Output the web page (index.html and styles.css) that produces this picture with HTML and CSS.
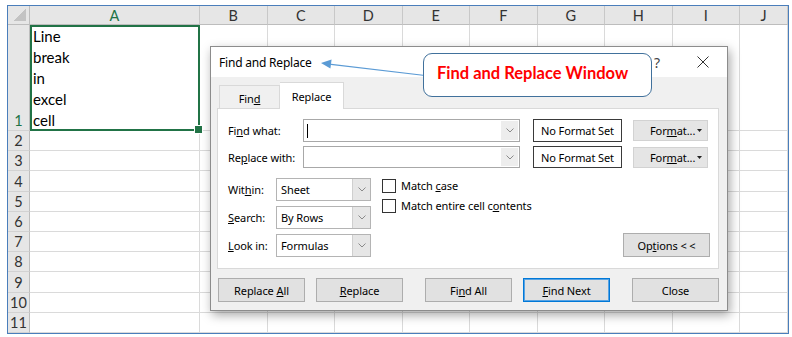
FILE: index.html
```html
<!DOCTYPE html>
<html>
<head>
<meta charset="utf-8">
<link rel="stylesheet" href="styles.css">
</head>
<body>
<div class="frame">
  <div class="grid">
    <div class="corner"></div>
    <div class="ch sel-h">A</div><div class="ch">B</div><div class="ch">C</div><div class="ch">D</div><div class="ch">E</div><div class="ch">F</div><div class="ch">G</div><div class="ch">H</div><div class="ch">I</div><div class="ch">J</div>

    <div class="rh sel-h">1</div>
    <div class="c sel"><div>Line</div><div>break</div><div>in</div><div>excel</div><div>cell</div></div>
    <div class="c"></div><div class="c"></div><div class="c"></div><div class="c"></div><div class="c"></div><div class="c"></div><div class="c"></div><div class="c"></div><div class="c"></div>

    <div class="rh">2</div><div class="c"></div><div class="c"></div><div class="c"></div><div class="c"></div><div class="c"></div><div class="c"></div><div class="c"></div><div class="c"></div><div class="c"></div><div class="c"></div>
    <div class="rh">3</div><div class="c"></div><div class="c"></div><div class="c"></div><div class="c"></div><div class="c"></div><div class="c"></div><div class="c"></div><div class="c"></div><div class="c"></div><div class="c"></div>
    <div class="rh">4</div><div class="c"></div><div class="c"></div><div class="c"></div><div class="c"></div><div class="c"></div><div class="c"></div><div class="c"></div><div class="c"></div><div class="c"></div><div class="c"></div>
    <div class="rh">5</div><div class="c"></div><div class="c"></div><div class="c"></div><div class="c"></div><div class="c"></div><div class="c"></div><div class="c"></div><div class="c"></div><div class="c"></div><div class="c"></div>
    <div class="rh">6</div><div class="c"></div><div class="c"></div><div class="c"></div><div class="c"></div><div class="c"></div><div class="c"></div><div class="c"></div><div class="c"></div><div class="c"></div><div class="c"></div>
    <div class="rh">7</div><div class="c"></div><div class="c"></div><div class="c"></div><div class="c"></div><div class="c"></div><div class="c"></div><div class="c"></div><div class="c"></div><div class="c"></div><div class="c"></div>
    <div class="rh">8</div><div class="c"></div><div class="c"></div><div class="c"></div><div class="c"></div><div class="c"></div><div class="c"></div><div class="c"></div><div class="c"></div><div class="c"></div><div class="c"></div>
    <div class="rh">9</div><div class="c"></div><div class="c"></div><div class="c"></div><div class="c"></div><div class="c"></div><div class="c"></div><div class="c"></div><div class="c"></div><div class="c"></div><div class="c"></div>
    <div class="rh">10</div><div class="c"></div><div class="c"></div><div class="c"></div><div class="c"></div><div class="c"></div><div class="c"></div><div class="c"></div><div class="c"></div><div class="c"></div><div class="c"></div>
    <div class="rh">11</div><div class="c"></div><div class="c"></div><div class="c"></div><div class="c"></div><div class="c"></div><div class="c"></div><div class="c"></div><div class="c"></div><div class="c"></div><div class="c"></div>
  </div>
</div>

<div class="dialog">
  <div class="titlebar">
    <span class="title">Find and Replace</span>
    <span class="help">?</span>
    <svg class="close" width="12" height="12" viewBox="0 0 12 12"><path d="M0.5 0.5L11.5 11.5M11.5 0.5L0.5 11.5" stroke="#333" stroke-width="1" fill="none"/></svg>
  </div>
  <div class="body">
    <div class="tabs">
      <div class="tab"><span>Fin<u>d</u></span></div>
      <div class="tab active"><span>Replace</span></div>
    </div>
    <div class="panel">
      <div class="row row1">
        <span class="lbl">Fi<u>n</u>d what:</span>
        <div class="input"><div class="field"><span class="caret"></span></div><div class="dd"><svg width="8" height="5" viewBox="0 0 8 5"><path d="M0.5 0.5L4 4L7.5 0.5" fill="none" stroke="#8a8a8a"/></svg></div></div>
        <div class="nfs"><span>No Format Set</span></div>
        <div class="fmt"><span>For<u>m</u>at...</span><svg width="5" height="3" viewBox="0 0 5 3"><path d="M0 0H5L2.5 3Z" fill="#222"/></svg></div>
      </div>
      <div class="row row2">
        <span class="lbl">Re<u>p</u>lace with:</span>
        <div class="input"><div class="field"></div><div class="dd"><svg width="8" height="5" viewBox="0 0 8 5"><path d="M0.5 0.5L4 4L7.5 0.5" fill="none" stroke="#8a8a8a"/></svg></div></div>
        <div class="nfs"><span>No Format Set</span></div>
        <div class="fmt"><span>For<u>m</u>at...</span><svg width="5" height="3" viewBox="0 0 5 3"><path d="M0 0H5L2.5 3Z" fill="#222"/></svg></div>
      </div>
      <div class="lower">
        <div class="opts">
          <div class="orow"><span class="olbl">Wit<u>h</u>in:</span><div class="combo"><span>Sheet</span><div class="dd"><svg width="8" height="5" viewBox="0 0 8 5"><path d="M0.5 0.5L4 4L7.5 0.5" fill="none" stroke="#8a8a8a"/></svg></div></div></div>
          <div class="orow"><span class="olbl"><u>S</u>earch:</span><div class="combo"><span>By Rows</span><div class="dd"><svg width="8" height="5" viewBox="0 0 8 5"><path d="M0.5 0.5L4 4L7.5 0.5" fill="none" stroke="#8a8a8a"/></svg></div></div></div>
          <div class="orow"><span class="olbl"><u>L</u>ook in:</span><div class="combo"><span>Formulas</span><div class="dd"><svg width="8" height="5" viewBox="0 0 8 5"><path d="M0.5 0.5L4 4L7.5 0.5" fill="none" stroke="#8a8a8a"/></svg></div></div></div>
        </div>
        <div class="checks">
          <div class="chk"><span class="box"></span><span>Match <u>c</u>ase</span></div>
          <div class="chk"><span class="box"></span><span>Match entire cell c<u>o</u>ntents</span></div>
        </div>
        <div class="btn options-btn"><span>Op<u>t</u>ions &lt; &lt;</span></div>
      </div>
    </div>
    <div class="buttons">
      <div class="btn"><span>Replace <u>A</u>ll</span></div>
      <div class="btn gap-s"><span><u>R</u>eplace</span></div>
      <div class="btn gap-l"><span>Fi<u>n</u>d All</span></div>
      <div class="btn gap-s default"><span><u>F</u>ind Next</span></div>
      <div class="btn gap-l"><span>Close</span></div>
    </div>
  </div>
</div>

<svg class="arrow" width="112" height="25" viewBox="0 0 112 25">
  <path d="M14 9.1L110 20.5" stroke="#5b9bd5" stroke-width="1.2" fill="none"/>
  <path d="M6 8L16.6 4.6L15.4 13.4Z" fill="#5b9bd5"/>
</svg>

<div class="callout"><span>Find and Replace Window</span></div>
</body>
</html>
```

FILE: styles.css
```css
* { box-sizing: border-box; }
html, body { margin: 0; padding: 0; background: #fff; }
body {
  width: 792px;
  height: 337px;
  overflow: hidden;
  font-family: "Noto Sans", "Open Sans", sans-serif;
}

/* ---------- spreadsheet ---------- */
.frame {
  margin: 5px 0 0 7px;
  width: 782px;
  height: 329px;
  border: 1px solid #4a7ebb;
  overflow: hidden;
}
.grid {
  display: grid;
  grid-template-columns: 22px 170px repeat(8, 67.5px) 48px;
  grid-template-rows: 19px 106px repeat(10, 20.2px);
  font-family: Lato, "Liberation Sans", sans-serif;
  font-size: 15px;
  color: #000;
}
.corner {
  background: linear-gradient(to bottom right, transparent 50%, #c3c3c3 50%) no-repeat right 3px bottom 3px / 12px 12px, #e6e6e6;
  border-right: 1px solid #bdbdbd;
  border-bottom: 1px solid #bdbdbd;
}
.ch {
  background: #e6e6e6;
  border-right: 1px solid #c8c8c8;
  border-bottom: 1px solid #bdbdbd;
  color: #333;
  display: flex;
  align-items: center;
  justify-content: center;
  font-size: 14.5px;
}
.rh {
  background: #e6e6e6;
  border-right: 1px solid #bdbdbd;
  border-bottom: 1px solid #d2d2d2;
  color: #333;
  display: flex;
  align-items: flex-end;
  justify-content: center;
  font-size: 14.5px;
  line-height: 19px;
}
.sel-h { color: #217346; }
.c {
  border-right: 1px solid #dadada;
  border-bottom: 1px solid #dadada;
}
.sel {
  position: relative;
  z-index: 1;
  outline: 2px solid #217346;
  outline-offset: -2px;
  padding: 1px 0 0 3px;
  line-height: 21px;
  display: flex;
  flex-direction: column;
}
.sel::after {
  content: "";
  position: absolute;
  right: -4px;
  bottom: -4px;
  width: 7px;
  height: 7px;
  background: #217346;
  border: 1px solid #fff;
}

/* ---------- dialog ---------- */
.dialog {
  position: absolute;
  left: 210px;
  top: 46px;
  width: 518px;
  height: 265px;
  border: 1px solid #8c8c8c;
  background: #f0f0f0;
  box-shadow: 2px 4px 10px rgba(0, 0, 0, 0.35);
  display: flex;
  flex-direction: column;
  font-size: 11px;
  letter-spacing: -0.1px;
  color: #000;
  z-index: 2;
}
.titlebar {
  height: 30px;
  background: #fff;
  display: flex;
  align-items: center;
  padding: 0 18px 0 8px;
  font-size: 12px;
  letter-spacing: -0.2px;
}
.title { flex: 1; }
.help {
  font-size: 14px;
  color: #444;
  margin-right: 37px;
}
.close { display: block; }
.body {
  flex: 1;
  padding: 5px 8px 8px 6px;
  display: flex;
  flex-direction: column;
}
.tabs {
  display: flex;
  height: 27px;
  padding-left: 2px;
  margin-bottom: -1px;
  position: relative;
  z-index: 1;
}
.tab {
  margin-top: 3px;
  width: 61px;
  height: 23px;
  border: 1px solid #d9d9d9;
  border-bottom: none;
  background: #f0f0f0;
  display: flex;
  align-items: center;
  justify-content: center;
  padding-top: 3px;
}
.tab.active {
  margin-top: 0;
  width: 64px;
  height: 27px;
  background: #fff;
  border-left: none;
  padding-top: 0;
}
.panel {
  height: 161px;
  background: #fff;
  border: 1px solid #d9d9d9;
  padding: 10px 9px 10px 10px;
  display: flex;
  flex-direction: column;
}
.row { display: flex; align-items: center; }
.row1 { height: 23px; }
.row2 { height: 22px; margin-top: 4px; }
.lbl { width: 75px; }
.input {
  width: 217px;
  height: 100%;
  border: 1px solid #a8a8a8;
  display: flex;
  background: #fff;
}
.field { flex: 1; display: flex; align-items: center; }
.caret {
  width: 1px;
  height: 14px;
  background: #000;
  margin-left: 3px;
}
.dd {
  width: 17px;
  margin: 1px;
  background: #ededed;
  display: flex;
  align-items: center;
  justify-content: center;
}
.dd svg { display: block; }
.nfs {
  width: 89px;
  height: 100%;
  margin-left: 13px;
  border: 1px solid #3a3a3a;
  display: flex;
  align-items: center;
  justify-content: center;
}
.fmt {
  width: 75px;
  height: 21px;
  margin-left: 11px;
  background: #e5e5e5;
  border: 1px solid #d2d2d2;
  display: flex;
  align-items: center;
  justify-content: space-between;
  padding: 0 5px 0 16px;
}
.fmt svg { display: block; }
.lower {
  display: flex;
  margin-top: 10px;
  flex: 1;
}
.opts {
  display: flex;
  flex-direction: column;
  gap: 5px;
}
.orow {
  display: flex;
  align-items: center;
  height: 23px;
}
.olbl { width: 48px; }
.combo {
  width: 95px;
  height: 23px;
  border: 1px solid #b4b4b4;
  display: flex;
}
.combo span {
  flex: 1;
  padding-left: 4px;
  display: flex;
  align-items: center;
}
.combo .dd {
  width: 18px;
  margin: 0;
  background: #e6e6e6;
  border-left: 1px solid #cfcfcf;
}
.checks {
  margin-left: 11px;
  display: flex;
  flex-direction: column;
  gap: 5px;
}
.chk {
  display: flex;
  align-items: center;
  height: 15px;
}
.box {
  width: 14px;
  height: 14px;
  border: 1px solid #333;
  margin-right: 5px;
  background: #fff;
}
.btn {
  width: 87px;
  height: 24px;
  background: #e1e1e1;
  border: 1px solid #adadad;
  display: flex;
  align-items: center;
  justify-content: center;
}
.options-btn {
  margin-left: auto;
  align-self: flex-end;
  margin-bottom: 1px;
  margin-right: -1px;
}
.buttons {
  display: flex;
  margin-top: 9px;
  height: 24px;
  padding-left: 1px;
}
.gap-s { margin-left: 11px; }
.gap-l { margin-left: 22px; }
.default {
  border: 1px solid #0078d7;
  box-shadow: inset 0 0 0 1px #58a3e3;
}

/* ---------- annotation ---------- */
.arrow {
  position: absolute;
  left: 315px;
  top: 55px;
  z-index: 3;
}
.callout {
  position: absolute;
  left: 423px;
  top: 53px;
  width: 229px;
  height: 44px;
  border: 1.5px solid #41719c;
  border-radius: 9px;
  background: #fff;
  display: flex;
  align-items: center;
  padding: 0 0 5px 13px;
  color: #ff0000;
  font-family: Lato, "Liberation Sans", sans-serif;
  font-weight: bold;
  font-size: 16.5px;
  z-index: 4;
}
```
